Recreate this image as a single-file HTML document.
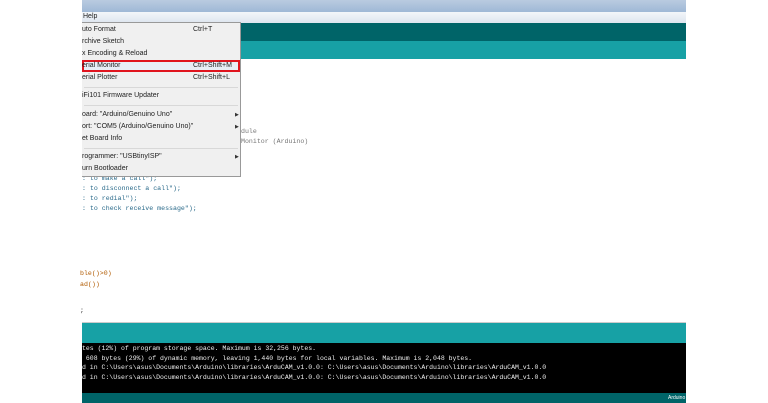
<!DOCTYPE html>
<html><head><style>
*{margin:0;padding:0;box-sizing:border-box}
body{width:768px;height:403px;background:#fff;position:relative;overflow:hidden;font-family:"Liberation Sans",sans-serif}
.a{position:absolute}
.mono{font-family:"Liberation Mono",monospace;font-size:6.6px;white-space:pre}
.mi{position:absolute;left:82px;font-size:7px;color:#222;white-space:pre}
.sc{position:absolute;left:193px;font-size:7px;color:#222}
.arr{position:absolute;left:235px;font-size:5px;color:#333}
.sep{position:absolute;left:84px;width:154px;height:1px;background:#d8d8d8}
</style></head><body>
<div class="a" style="left:82px;top:0;width:604px;height:12px;background:linear-gradient(#b9cbe0,#9fb8d6)"></div>
<div class="a" style="left:82px;top:12px;width:604px;height:11px;background:linear-gradient(#f3f6fa,#dde5ef)"></div>
<div class="a" style="left:83px;top:13px;font-size:7px;color:#222">Help</div>
<div class="a" style="left:82px;top:23px;width:604px;height:18px;background:#006468"></div>
<div class="a" style="left:82px;top:41px;width:604px;height:18px;background:#17a1a5"></div>
<div class="a mono" style="left:241px;top:127px;color:#777;line-height:10px">dule
Monitor (Arduino)</div>
<div class="a mono" style="left:82px;top:174px;color:#2a6a8a;line-height:10px">: to make a call");
: to disconnect a call");
: to redial");
: to check receive message");</div>
<div class="a mono" style="left:80px;top:268px;color:#b05a00;line-height:11px">ble()&gt;0)
ad())</div>
<div class="a mono" style="left:80px;top:307px;color:#333">;</div>
<div class="a" style="left:82px;top:322px;width:604px;height:1px;background:#ccc"></div>
<div class="a" style="left:82px;top:323px;width:604px;height:20px;background:#17a1a5"></div>
<div class="a" style="left:82px;top:343px;width:604px;height:50px;background:#000"></div>
<div class="a mono" style="left:82px;top:344px;color:#eee;line-height:9.7px;font-size:6.5px">tes (12%) of program storage space. Maximum is 32,256 bytes.
 608 bytes (29%) of dynamic memory, leaving 1,440 bytes for local variables. Maximum is 2,048 bytes.
d in C:\Users\asus\Documents\Arduino\libraries\ArduCAM_v1.0.0: C:\Users\asus\Documents\Arduino\libraries\ArduCAM_v1.0.0
d in C:\Users\asus\Documents\Arduino\libraries\ArduCAM_v1.0.0: C:\Users\asus\Documents\Arduino\libraries\ArduCAM_v1.0.0</div>
<div class="a" style="left:82px;top:393px;width:604px;height:10px;background:#006468"></div>
<div class="a" style="left:668px;top:395px;font-size:5px;color:#fff">Arduino</div>
<div class="a" style="left:82px;top:22px;width:159px;height:155px;background:#f0f0f0;border:1px solid #999;border-left:none"></div>
<div class="mi" style="top:26px">uto Format</div><div class="sc" style="top:26px">Ctrl+T</div>
<div class="mi" style="top:38px">rchive Sketch</div>
<div class="mi" style="top:50px">x Encoding &amp; Reload</div>
<div class="a" style="left:82px;top:60px;width:158px;height:12px;border:2px solid #e0141e;background:#e8eef6"></div>
<div class="mi" style="top:62px">erial Monitor</div><div class="sc" style="top:62px">Ctrl+Shift+M</div>
<div class="mi" style="top:74px">erial Plotter</div><div class="sc" style="top:74px">Ctrl+Shift+L</div>
<div class="sep" style="top:87px"></div>
<div class="mi" style="top:92px">iFi101 Firmware Updater</div>
<div class="sep" style="top:105px"></div>
<div class="mi" style="top:111px">oard: "Arduino/Genuino Uno"</div><div class="arr" style="top:112px">▶</div>
<div class="mi" style="top:123px">ort: "COM5 (Arduino/Genuino Uno)"</div><div class="arr" style="top:124px">▶</div>
<div class="mi" style="top:135px">et Board Info</div>
<div class="sep" style="top:148px"></div>
<div class="mi" style="top:153px">rogrammer: "USBtinyISP"</div><div class="arr" style="top:154px">▶</div>
<div class="mi" style="top:165px">urn Bootloader</div>
</body></html>
